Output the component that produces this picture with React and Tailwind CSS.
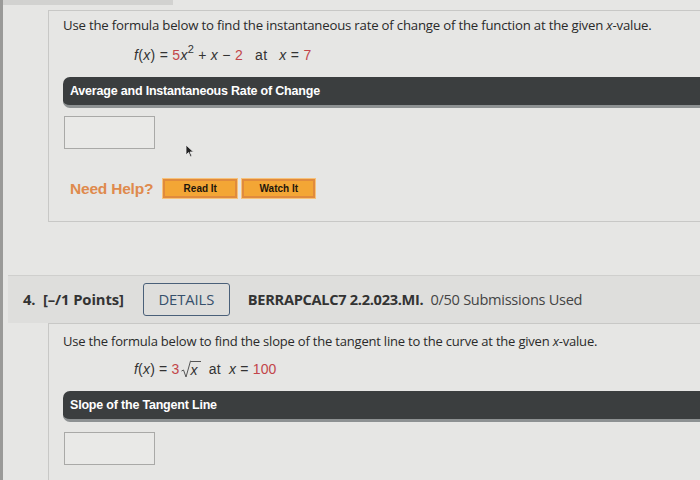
import React from "react";

const body = { fontFamily: '"Open Sans", "Liberation Sans", sans-serif' };
const math = { fontFamily: '"Liberation Sans", Arial, sans-serif' };
const bar = { fontFamily: '"Liberation Sans", Arial, sans-serif' };

function SectionBar({ children }) {
  return (
    <div
      className="h-[31px] rounded-l-[7px] bg-[#3b3e3f] border-b-[3px] border-[#8d9192] flex items-center pl-[7px] text-white font-bold text-[12.5px] tracking-[-0.2px]"
      style={bar}
    >
      {children}
    </div>
  );
}

function AnswerBox() {
  return <div className="w-[91px] h-[33px] border-[1.5px] border-[#a9a9a7] bg-[#e9e9e7]" />;
}

function Red({ children }) {
  return <span className="text-[#c2454a]">{children}</span>;
}

export default function App() {
  return (
    <div className="w-[700px] h-[480px] overflow-hidden bg-[#e6e6e4] relative border-l-[3px] border-[#9a9a98]" style={body}>
      {/* strip above first panel */}
      <div className="h-[10px] flex">
        <div className="w-[170px] h-[5px] bg-[#d2d2d0]" />
      </div>

      {/* first panel */}
      <div className="ml-[45px] border-l border-t border-b border-[#c8c8c6] h-[212px] pl-[14px] pt-[4px]">
        <p className="text-[13.2px] leading-[20px] text-[#2a2a2a] tracking-[-0.2px]">
          Use the formula below to find the instantaneous rate of change of the function at the given <i>x</i>-value.
        </p>
        <div className="ml-[71px] mt-[9px] h-[20px] flex items-end text-[14px] leading-[18px] text-[#333] tracking-[0.3px]" style={math}>
          <span>
            <i>f</i>(<i>x</i>) = <Red>5</Red><i>x</i>
          </span>
          <span className="text-[11px] self-start leading-[11px]">2</span>
          <span className="ml-[4px]">
            + <i>x</i> − <Red>2</Red>
          </span>
          <span className="ml-[12px]">at</span>
          <span className="ml-[12px]">
            <i>x</i> = <Red>7</Red>
          </span>
        </div>
        <div className="mt-[13px]">
          <SectionBar>Average and Instantaneous Rate of Change</SectionBar>
        </div>
        <div className="mt-[8px] ml-[1px] relative">
          <AnswerBox />
          <svg className="absolute left-[121px] top-[28px]" width="10" height="14" viewBox="0 0 10 14">
            <path d="M1 1 L1 11 L3.5 8.5 L5.5 13 L7 12.3 L5 8 L8.5 8 Z" fill="#222" stroke="#eee" strokeWidth="0.8" />
          </svg>
        </div>
        <div className="mt-[28px] flex items-center ml-[7px]">
          <span className="text-[#df8a4d] font-semibold text-[15.5px] tracking-[-0.2px]" style={bar}>Need Help?</span>
          <div className="flex gap-[5px] ml-[10px]">
            <button className="w-[74px] h-[19px] bg-[#f3a635] border-[2px] border-[#e08b3d] outline outline-1 outline-[#f7c27a] text-[10px] font-bold text-[#1e160c]" style={bar}>
              Read It
            </button>
            <button className="w-[73px] h-[19px] bg-[#f3a635] border-[2px] border-[#e08b3d] outline outline-1 outline-[#f7c27a] text-[10px] font-bold text-[#1e160c]" style={bar}>
              Watch It
            </button>
          </div>
        </div>
      </div>

      {/* question 4 header */}
      <div className="mt-[53px] ml-[5px] h-[48px] bg-[#dededc] border-t border-[#cfcfcd] flex items-center pl-[15px]">
        <span className="font-bold text-[14.8px] text-[#333] tracking-[-0.1px]">4.&nbsp; [–/1 Points]</span>
        <div className="ml-[19px] h-[33px] w-[87px] border-[1.5px] border-[#4a6079] rounded-[3px] flex items-center justify-center text-[14.8px] text-[#36506b] tracking-[-0.1px]">
          DETAILS
        </div>
        <span className="ml-[18px] font-bold text-[14.6px] text-[#333] tracking-[-0.3px]">BERRAPCALC7 2.2.023.MI.</span>
        <span className="ml-[7px] text-[14.6px] text-[#444] tracking-[-0.3px]">0/50 Submissions Used</span>
      </div>

      {/* second panel */}
      <div className="ml-[45px] border-l border-t border-[#c8c8c6] h-[200px] pl-[14px] pt-[7px]">
        <p className="text-[13px] leading-[20px] text-[#2a2a2a] tracking-[-0.2px]">
          Use the formula below to find the slope of the tangent line to the curve at the given <i>x</i>-value.
        </p>
        <div className="ml-[71px] mt-[7px] h-[20px] text-[14px] leading-[17px] text-[#333] flex items-end tracking-[0.2px]" style={math}>
          <span>
            <i>f</i>(<i>x</i>) = <Red>3</Red>
          </span>
          <span className="inline-flex items-end">
            <svg width="10" height="18" viewBox="0 0 10 18" className="ml-[1px]">
              <path d="M0.5 11 L2.5 10 L5 17 L9.5 1 L10 1" fill="none" stroke="#555" strokeWidth="1" />
            </svg>
            <span className="border-t border-[#555] pr-[3px] leading-[16px]">
              <i>x</i>
            </span>
          </span>
          <span className="ml-[8px]">at</span>
          <span className="ml-[8px]">
            <i>x</i> = <Red>100</Red>
          </span>
        </div>
        <div className="mt-[13px]">
          <SectionBar>Slope of the Tangent Line</SectionBar>
        </div>
        <div className="mt-[10px] ml-[1px]">
          <AnswerBox />
        </div>
      </div>
    </div>
  );
}
